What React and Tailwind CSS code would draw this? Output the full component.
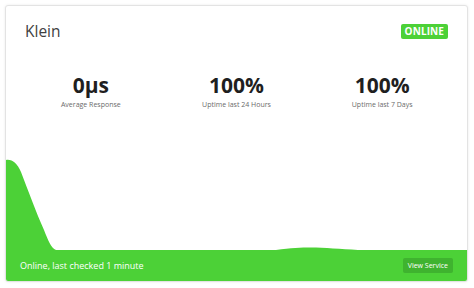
export default function App() {
  return (
    <div className="w-[474px] h-[288px] bg-white p-[5px] pr-[6px]" style={{ fontFamily: '"Open Sans", "Noto Sans", sans-serif' }}>
      <div className="w-[463px] h-[277px] border border-[#e3e3e3] rounded-[3px] shadow-[0_0_3px_rgba(0,0,0,0.08)] bg-white overflow-hidden flex flex-col">
        <div className="flex items-center justify-between pl-[19px] pr-[19px] pt-[13px]">
          <div className="text-[15.5px] leading-[24px] text-[#3f3f3f]">Klein</div>
          <div className="bg-[#4cd137] text-white font-bold text-[10px] leading-[15px] h-[15px] px-[4px] rounded-[2px] tracking-[0.1px]">ONLINE</div>
        </div>
        <div className="grid grid-cols-3 px-[12px] mt-[29px]">
          {[
            ["0µs", "Average Response"],
            ["100%", "Uptime last 24 Hours"],
            ["100%", "Uptime last 7 Days"],
          ].map(([v, l]) => (
            <div key={l} className="flex flex-col items-center">
              <div className="text-[21px] leading-[26px] font-bold text-[#1f1f1f]">{v}</div>
              <div className="text-[7px] leading-[12px] text-[#6b6b6b] mt-[0.5px]">{l}</div>
            </div>
          ))}
        </div>
        <svg className="block mt-[39.5px]" width="461" height="100" viewBox="0 0 461 100">
          <path
            d="M0,10 C6,9 11,13 15,22 C22,40 30,62 38,80 C42,90 45,98 50,100 L270,100 C285,98 295,97.5 305,97.5 C318,97.5 335,99 352,100 L461,100 L461,101 L0,101 Z"
            fill="#4cd137"
          />
        </svg>
        <div className="flex-1 bg-[#4cd137] flex items-center justify-between pl-[14px] pr-[14px]">
          <div className="text-white text-[9px] leading-[14px]">Online, last checked 1 minute</div>
          <div className="bg-[#3fb32f] text-white text-[7px] leading-[15px] h-[15px] px-[5px] rounded-[2px]">View Service</div>
        </div>
      </div>
    </div>
  );
}
